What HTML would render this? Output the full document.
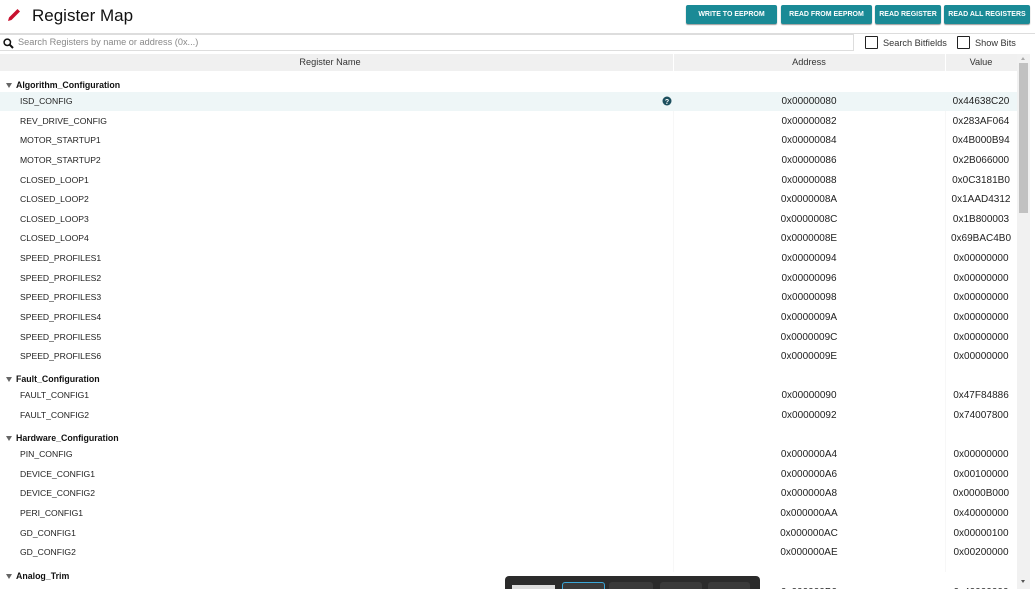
<!DOCTYPE html>
<html><head><meta charset="utf-8"><style>
*{margin:0;padding:0;box-sizing:border-box}
html,body{width:1035px;height:589px;overflow:hidden}
body{background:#fff;font-family:"Liberation Sans",sans-serif;color:#222;position:relative}
.a{position:absolute}
.btn{position:absolute;top:5px;height:19px;background:#1a8a96;border-radius:2px;color:#fff;font-size:7px;font-weight:bold;text-align:center;line-height:19px;box-shadow:0 1px 1px #999}
.r{position:absolute;left:0;width:1017px;height:20px;line-height:20px;font-size:8.6px;color:#222}
.r .n{position:absolute;left:20px}
.r .ad{position:absolute;top:1px;left:673px;width:272px;text-align:center;font-size:10px}
.r .v{position:absolute;top:1px;left:945px;width:72px;text-align:center;font-size:10px}
.g{position:absolute;left:0;height:16px;line-height:16px;font-size:8.8px;font-weight:bold;color:#111}
.g:before{content:"";position:absolute;left:6px;top:6px;border-left:3px solid transparent;border-right:3px solid transparent;border-top:5px solid #666}
.g span{position:absolute;left:16px;white-space:nowrap}
.cb{position:absolute;top:36px;width:13px;height:13px;border:1.5px solid #222;border-radius:1px}
</style></head><body>
<svg class="a" style="left:6px;top:7px" width="16" height="16" viewBox="0 0 16 16"><path d="M2 14 L3 10.5 L11.5 2 L14 4.5 L5.5 13 Z" fill="#c8102e"/></svg>
<div class="a" style="left:32px;top:6px;font-size:17px;color:#111">Register Map</div>
<div class="btn" style="left:686px;width:91px">WRITE TO EEPROM</div>
<div class="btn" style="left:781px;width:91px">READ FROM EEPROM</div>
<div class="btn" style="left:875px;width:66px">READ REGISTER</div>
<div class="btn" style="left:944px;width:86px">READ ALL REGISTERS</div>
<div class="a" style="left:0;top:33px;width:1035px;height:1px;background:#ddd"></div>
<svg class="a" style="left:3px;top:38px" width="11" height="11" viewBox="0 0 11 11"><circle cx="4.3" cy="4.3" r="3.2" fill="none" stroke="#111" stroke-width="1.5"/><path d="M6.6 6.6 L10 10" stroke="#111" stroke-width="2"/></svg>
<div class="a" style="left:0;top:34px;width:854px;height:17px;border:1px solid #ddd;border-left:none"></div>
<div class="a" style="left:18px;top:37px;font-size:9.2px;color:#888">Search Registers by name or address (0x...)</div>
<div class="cb" style="left:865px"></div>
<div class="a" style="left:883px;top:38px;font-size:9.2px;color:#333">Search Bitfields</div>
<div class="cb" style="left:957px"></div>
<div class="a" style="left:975px;top:38px;font-size:9.2px;color:#333">Show Bits</div>
<div class="a" style="left:0;top:54px;width:1017px;height:17px;background:#f0f0f0"></div>
<div class="a" style="left:673px;top:54px;width:1px;height:17px;background:#fff"></div>
<div class="a" style="left:945px;top:54px;width:1px;height:17px;background:#fff"></div>
<div class="a" style="left:0;top:54px;width:660px;line-height:17px;text-align:center;font-size:9.2px;color:#333">Register Name</div>
<div class="a" style="left:673px;top:54px;width:272px;line-height:17px;text-align:center;font-size:9.2px;color:#333">Address</div>
<div class="a" style="left:945px;top:54px;width:72px;line-height:17px;text-align:center;font-size:9.2px;color:#333">Value</div>
<div class="a" style="left:1017px;top:54px;width:13px;height:535px;background:#f1f1f1"></div>
<div class="a" style="left:1019px;top:63px;width:9px;height:150px;background:#c1c1c1"></div>
<div class="a" style="left:1021px;top:57px;border-left:2.5px solid transparent;border-right:2.5px solid transparent;border-bottom:3px solid #aaa"></div>
<div class="a" style="left:1021px;top:580px;border-left:2.5px solid transparent;border-right:2.5px solid transparent;border-top:3px solid #555"></div>
<div class="a" style="left:673px;top:92px;width:1px;height:480px;background:#f7f7f7"></div>
<div class="a" style="left:945px;top:92px;width:1px;height:480px;background:#f7f7f7"></div>
<div class="a" style="left:0;top:92px;width:1017px;height:19px;background:#eef6f7"></div>
<svg class="a" style="left:662px;top:96px" width="10" height="10" viewBox="0 0 10 10"><circle cx="5" cy="5" r="4.5" fill="#1d4f5e"/><text x="5" y="8" font-size="7" font-weight="bold" fill="#fff" text-anchor="middle" font-family="Liberation Sans">?</text></svg>
<div class="g" style="top:77px"><span>Algorithm_Configuration</span></div>
<div class="r" style="top:91px"><span class="n">ISD_CONFIG</span><span class="ad">0x00000080</span><span class="v">0x44638C20</span></div>
<div class="r" style="top:111px"><span class="n">REV_DRIVE_CONFIG</span><span class="ad">0x00000082</span><span class="v">0x283AF064</span></div>
<div class="r" style="top:130px"><span class="n">MOTOR_STARTUP1</span><span class="ad">0x00000084</span><span class="v">0x4B000B94</span></div>
<div class="r" style="top:150px"><span class="n">MOTOR_STARTUP2</span><span class="ad">0x00000086</span><span class="v">0x2B066000</span></div>
<div class="r" style="top:170px"><span class="n">CLOSED_LOOP1</span><span class="ad">0x00000088</span><span class="v">0x0C3181B0</span></div>
<div class="r" style="top:189px"><span class="n">CLOSED_LOOP2</span><span class="ad">0x0000008A</span><span class="v">0x1AAD4312</span></div>
<div class="r" style="top:209px"><span class="n">CLOSED_LOOP3</span><span class="ad">0x0000008C</span><span class="v">0x1B800003</span></div>
<div class="r" style="top:228px"><span class="n">CLOSED_LOOP4</span><span class="ad">0x0000008E</span><span class="v">0x69BAC4B0</span></div>
<div class="r" style="top:248px"><span class="n">SPEED_PROFILES1</span><span class="ad">0x00000094</span><span class="v">0x00000000</span></div>
<div class="r" style="top:268px"><span class="n">SPEED_PROFILES2</span><span class="ad">0x00000096</span><span class="v">0x00000000</span></div>
<div class="r" style="top:287px"><span class="n">SPEED_PROFILES3</span><span class="ad">0x00000098</span><span class="v">0x00000000</span></div>
<div class="r" style="top:307px"><span class="n">SPEED_PROFILES4</span><span class="ad">0x0000009A</span><span class="v">0x00000000</span></div>
<div class="r" style="top:327px"><span class="n">SPEED_PROFILES5</span><span class="ad">0x0000009C</span><span class="v">0x00000000</span></div>
<div class="r" style="top:346px"><span class="n">SPEED_PROFILES6</span><span class="ad">0x0000009E</span><span class="v">0x00000000</span></div>
<div class="g" style="top:371px"><span>Fault_Configuration</span></div>
<div class="r" style="top:385px"><span class="n">FAULT_CONFIG1</span><span class="ad">0x00000090</span><span class="v">0x47F84886</span></div>
<div class="r" style="top:405px"><span class="n">FAULT_CONFIG2</span><span class="ad">0x00000092</span><span class="v">0x74007800</span></div>
<div class="g" style="top:430px"><span>Hardware_Configuration</span></div>
<div class="r" style="top:444px"><span class="n">PIN_CONFIG</span><span class="ad">0x000000A4</span><span class="v">0x00000000</span></div>
<div class="r" style="top:464px"><span class="n">DEVICE_CONFIG1</span><span class="ad">0x000000A6</span><span class="v">0x00100000</span></div>
<div class="r" style="top:483px"><span class="n">DEVICE_CONFIG2</span><span class="ad">0x000000A8</span><span class="v">0x0000B000</span></div>
<div class="r" style="top:503px"><span class="n">PERI_CONFIG1</span><span class="ad">0x000000AA</span><span class="v">0x40000000</span></div>
<div class="r" style="top:523px"><span class="n">GD_CONFIG1</span><span class="ad">0x000000AC</span><span class="v">0x00000100</span></div>
<div class="r" style="top:542px"><span class="n">GD_CONFIG2</span><span class="ad">0x000000AE</span><span class="v">0x00200000</span></div>
<div class="g" style="top:568px"><span>Analog_Trim</span></div>
<div class="r" style="top:582px"><span class="n">ANALOG_TRIM1</span><span class="ad">0x000000B0</span><span class="v">0x40000000</span></div>
<div class="a" style="left:505px;top:576px;width:255px;height:20px;background:#2b2b2b;border-radius:4px"></div>
<div class="a" style="left:512px;top:585px;width:43px;height:10px;background:#ddd"></div>
<div class="a" style="left:562px;top:582px;width:43px;height:12px;background:#3a3a3a;border:1.5px solid #3aa7d8;border-radius:3px"></div>
<div class="a" style="left:609px;top:582px;width:44px;height:12px;background:#3a3a3a;border-radius:3px"></div>
<div class="a" style="left:660px;top:582px;width:42px;height:12px;background:#3a3a3a;border-radius:3px"></div>
<div class="a" style="left:708px;top:582px;width:42px;height:12px;background:#3a3a3a;border-radius:3px"></div>
</body></html>
